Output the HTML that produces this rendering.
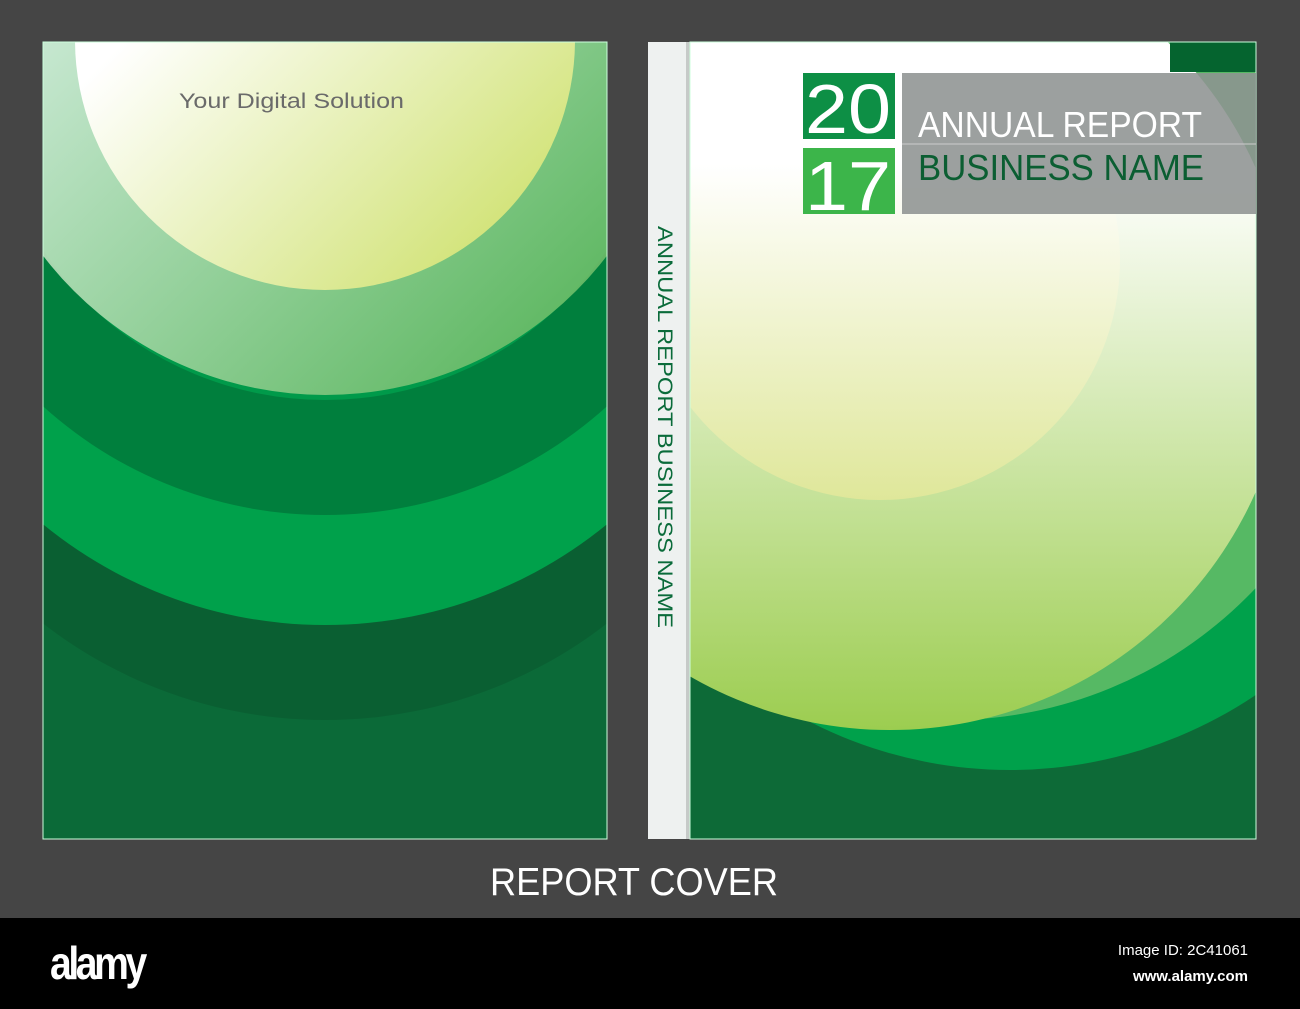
<!DOCTYPE html>
<html><head><style>
body{margin:0;width:1300px;height:1009px;background:#454545;overflow:hidden;font-family:"Liberation Sans",sans-serif;position:relative}
.bar{position:absolute;left:0;top:918px;width:1300px;height:91px;background:#000}
</style></head><body>
<svg width="1300" height="918" style="position:absolute;left:0;top:0">
<defs>
<linearGradient id="lc" x1="0" y1="0" x2="1" y2="1"><stop offset="0.3" stop-color="#ffffff"/><stop offset="1" stop-color="#c8dd5a"/></linearGradient>
<linearGradient id="lr1" x1="0" y1="0" x2="1" y2="1"><stop offset="0.2" stop-color="#ffffff"/><stop offset="1" stop-color="#55b14a"/></linearGradient>
<linearGradient id="rc" x1="0" y1="0" x2="0" y2="1"><stop offset="0.3" stop-color="#ffffff"/><stop offset="1" stop-color="#dfe79a"/></linearGradient>
<linearGradient id="rr" x1="0" y1="0" x2="0" y2="1"><stop offset="0.3" stop-color="#ffffff"/><stop offset="1" stop-color="#9ccd50"/></linearGradient>
<clipPath id="cl"><rect x="43" y="42" width="564" height="797"/></clipPath>
<clipPath id="cr"><rect x="690" y="42" width="566" height="797"/></clipPath>
</defs>
<g clip-path="url(#cl)">
<rect x="43" y="42" width="564" height="797" fill="#0b6a38"/>
<circle cx="325" cy="260" r="460" fill="#0a5f32"/>
<circle cx="325" cy="180" r="445" fill="#00a14b"/>
<circle cx="325" cy="95" r="420" fill="#007f3d"/>
<circle cx="325" cy="60" r="340" fill="#009a4a"/>
<circle cx="325" cy="40" r="355" fill="url(#lr1)" opacity="0.85"/>
<circle cx="325" cy="40" r="250" fill="url(#lc)"/>
</g>
<rect x="43" y="42" width="564" height="797" fill="none" stroke="#cfd" stroke-width="1"/>
<text x="179" y="108" font-size="21" fill="#6a6a6a" textLength="225" lengthAdjust="spacingAndGlyphs">Your Digital Solution</text>
<rect x="648" y="42" width="42" height="797" fill="#eef1f0"/>
<rect x="686" y="42" width="4" height="797" fill="#c6cac8"/>
<text transform="translate(658,226) rotate(90)" font-size="21" fill="#0a6b3a" textLength="402" lengthAdjust="spacingAndGlyphs">ANNUAL REPORT  BUSINESS NAME</text>
<g clip-path="url(#cr)">
<rect x="690" y="42" width="566" height="797" fill="#0d6a37"/>
<circle cx="1010" cy="330" r="440" fill="#00a14b"/>
<circle cx="950" cy="300" r="420" fill="#6cbf6a" opacity="0.8"/>
<circle cx="890" cy="330" r="400" fill="url(#rr)"/>
<circle cx="880" cy="260" r="240" fill="url(#rc)"/>
<rect x="1170" y="42" width="86" height="30" fill="#05642f"/>
</g>
<rect x="690" y="42" width="566" height="797" fill="none" stroke="#cfd" stroke-width="1"/>
<rect x="803" y="73" width="92" height="66" fill="#0d8f45"/>
<rect x="803" y="148" width="92" height="66" fill="#3cb54a"/>
<text x="805" y="133" font-size="70" fill="#fff" textLength="86" lengthAdjust="spacingAndGlyphs">20</text>
<text x="805" y="210" font-size="70" fill="#fff" textLength="86" lengthAdjust="spacingAndGlyphs">17</text>
<rect x="902" y="73" width="354" height="141" fill="#8e9392" opacity="0.88"/>
<line x1="902" y1="144" x2="1256" y2="144" stroke="#ccc" stroke-width="1"/>
<text x="918" y="137" font-size="36" fill="#fff" textLength="284" lengthAdjust="spacingAndGlyphs">ANNUAL REPORT</text>
<text x="918" y="180" font-size="36" fill="#0b5e32" textLength="286" lengthAdjust="spacingAndGlyphs">BUSINESS NAME</text>
<text x="490" y="895" font-size="39" fill="#fff" textLength="288" lengthAdjust="spacingAndGlyphs">REPORT COVER</text>
</svg>
<div class="bar">
<div style="position:absolute;left:50px;top:18px;color:#fff;font-size:46px;font-weight:bold;letter-spacing:-4px;transform:scaleX(0.85);transform-origin:left">alamy</div>
<div style="position:absolute;right:52px;top:20px;color:#fff;font-size:15px;text-align:right;line-height:26px">Image ID: 2C41061<br><b>www.alamy.com</b></div>
</div>
</body></html>
